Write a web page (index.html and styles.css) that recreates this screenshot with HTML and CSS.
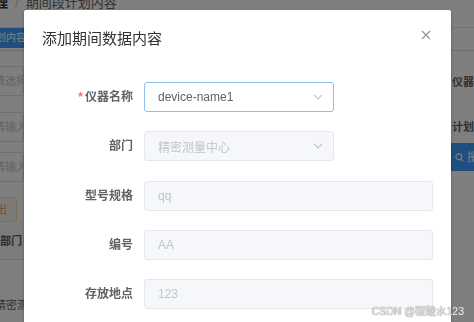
FILE: index.html
```html
<!DOCTYPE html>
<html lang="zh-CN">
<head>
<meta charset="utf-8">
<title>添加期间数据内容</title>
<link rel="stylesheet" href="styles.css">
</head>
<body>
<div class="page">
  <header class="navbar">
    <div class="breadcrumb">
      <span class="bc-prev">理</span><span class="bc-sep">/</span><span class="bc-cur">期间段计划内容</span>
    </div>
  </header>
  <nav class="tags">
    <span class="tag active">期间段计划内容</span>
  </nav>
  <main class="content">
    <div class="col-left">
      <div class="bg-input r1">请选择</div>
      <div class="bg-input r2">请输入</div>
      <div class="bg-input r3">请输入</div>
      <div class="bg-btn warn">导出</div>
      <div class="tbl-head">检测部门</div>
      <div class="tbl-row">精密测量中心</div>
    </div>
    <div class="col-right">
      <div class="bg-label r1">仪器名称</div>
      <div class="bg-label r2">计划名称</div>
      <div class="bg-btn primary">
        <svg class="search-ico" viewBox="0 0 10 10" width="9" height="9"><circle cx="4.3" cy="4.3" r="3.3" fill="none" stroke="#fff" stroke-width="1.2"/><line x1="6.8" y1="6.8" x2="9.2" y2="9.2" stroke="#fff" stroke-width="1.2"/></svg>
        <span>搜索</span>
      </div>
    </div>
  </main>
</div>

<div class="mask"></div>

<div class="dialog">
  <div class="dlg-header">
    <span class="dlg-title">添加期间数据内容</span>
    <button class="dlg-close" type="button" aria-label="关闭">
      <svg viewBox="0 0 10 10" width="10" height="10"><path d="M1 1 L9 9 M9 1 L1 9" stroke="#909399" stroke-width="1.1" fill="none"/></svg>
    </button>
  </div>
  <form class="dlg-body">
    <div class="form-item">
      <label class="form-label required">仪器名称</label>
      <div class="field select focused">
        <span class="value">device-name1</span>
        <svg class="arrow" viewBox="0 0 10 6" width="10" height="6"><polyline points="1,1 5,5 9,1" fill="none" stroke="#c0c4cc" stroke-width="1.1"/></svg>
      </div>
    </div>
    <div class="form-item">
      <label class="form-label">部门</label>
      <div class="field select disabled">
        <span class="placeholder">精密测量中心</span>
        <svg class="arrow" viewBox="0 0 10 6" width="10" height="6"><polyline points="1,1 5,5 9,1" fill="none" stroke="#c0c4cc" stroke-width="1.1"/></svg>
      </div>
    </div>
    <div class="form-item">
      <label class="form-label">型号规格</label>
      <div class="field disabled"><span class="placeholder">qq</span></div>
    </div>
    <div class="form-item">
      <label class="form-label">编号</label>
      <div class="field disabled"><span class="placeholder">AA</span></div>
    </div>
    <div class="form-item">
      <label class="form-label">存放地点</label>
      <div class="field disabled"><span class="placeholder">123</span></div>
    </div>
  </form>
</div>

<div class="watermark">CSDN @碳酸水123</div>
</body>
</html>
```

FILE: styles.css
```css
html, body {
  margin: 0;
  padding: 0;
  width: 474px;
  height: 322px;
  overflow: hidden;
  font-family: "Liberation Sans", "Noto Sans CJK SC", sans-serif;
}

/* ---------- background page ---------- */
.page {
  width: 474px;
  height: 322px;
  overflow: hidden;
  background: #fff;
}
.navbar {
  height: 27px;
  border-bottom: 1px solid #e6e6e6;
  overflow: hidden;
}
.breadcrumb {
  margin-top: -4px;
  margin-left: -5px;
  font-size: 13px;
  line-height: 13px;
  white-space: nowrap;
}
.bc-prev { color: #303133; font-weight: bold; }
.bc-sep { color: #c0c4cc; margin: 0 7px; }
.bc-cur { color: #606266; }

.tags {
  height: 22px;
  border-bottom: 1px solid #d8dce5;
  display: flex;
  overflow: hidden;
}
.tag {
  height: 20px;
  line-height: 20px;
  font-size: 10px;
  padding: 0 8px;
  white-space: nowrap;
}
.tag.active {
  background: #409eff;
  color: #fff;
  margin-left: -52px;
}

.content {
  display: flex;
  justify-content: space-between;
}
.col-left {
  width: 60px;
  margin-left: -36px;
  display: flex;
  flex-direction: column;
}
.bg-input {
  height: 28px;
  line-height: 28px;
  border: 1px solid #dcdfe6;
  border-radius: 3px;
  padding-left: 29px;
  font-size: 11px;
  color: #c0c4cc;
  white-space: nowrap;
  overflow: hidden;
}
.col-left .r1 { margin-top: 15px; }
.col-left .r2 { margin-top: 16px; }
.col-left .r3 { margin-top: 10px; }

.bg-btn {
  height: 25px;
  line-height: 25px;
  font-size: 11px;
  border-radius: 3px;
  box-sizing: border-box;
  white-space: nowrap;
}
.bg-btn.warn {
  margin-top: 15px;
  width: 53px;
  padding-left: 20px;
  background: #fdf6ec;
  border: 1px solid #f5dab1;
  color: #e6a23c;
}
.tbl-head {
  margin-top: 1px;
  height: 36px;
  line-height: 36px;
  background: #f8f8f9;
  border-bottom: 1px solid #dfe6ec;
  font-size: 11px;
  font-weight: bold;
  color: #515a6e;
  padding-left: 14px;
  white-space: nowrap;
}
.tbl-row {
  padding-top: 34px;
  line-height: 22px;
  font-size: 11px;
  color: #606266;
  padding-left: 31px;
  white-space: nowrap;
}

.col-right {
  width: 60px;
  margin-right: -32px;
  display: flex;
  flex-direction: column;
}
.bg-label {
  height: 30px;
  line-height: 30px;
  padding-left: 6px;
  font-size: 11px;
  font-weight: bold;
  color: #606266;
  white-space: nowrap;
}
.col-right .r1 { margin-top: 16px; }
.col-right .r2 { margin-top: 15px; }
.bg-btn.primary {
  margin-top: 1px;
  margin-left: -6px;
  height: 28px;
  padding-left: 15px;
  background: #409eff;
  color: #fff;
  display: flex;
  align-items: center;
  gap: 3px;
}

/* ---------- modal ---------- */
.mask {
  position: fixed;
  inset: 0;
  background: rgba(0, 0, 0, 0.5);
}
.dialog {
  position: absolute;
  left: 24px;
  top: 10px;
  width: 427px;
  height: 312px;
  background: #fff;
  border-radius: 2px 2px 0 0;
  box-shadow: 0 1px 3px rgba(0, 0, 0, 0.3);
  box-sizing: border-box;
  overflow: hidden;
}
.dlg-header {
  display: flex;
  justify-content: space-between;
  align-items: flex-start;
  padding: 17px 20px 8px 18px;
}
.dlg-title {
  font-size: 15px;
  line-height: 24px;
  color: #303133;
}
.dlg-close {
  margin-top: 3px;
  padding: 0;
  border: 0;
  background: none;
  width: 10px;
  height: 10px;
  display: block;
}
.dlg-close svg { display: block; }

.dlg-body {
  margin: 0;
  padding: 23px 18px 0 18px;
  display: flex;
  flex-direction: column;
  gap: 19.25px;
}
.form-item {
  display: grid;
  grid-template-columns: 91px 1fr;
  column-gap: 11px;
  align-items: start;
}
.form-label {
  text-align: right;
  font-size: 12px;
  line-height: 30px;
  font-weight: bold;
  color: #606266;
}
.form-label.required::before {
  content: "*";
  color: #f56c6c;
  margin-right: 2px;
}
.field {
  height: 30px;
  box-sizing: border-box;
  border: 1px solid #dcdfe6;
  border-radius: 3px;
  display: flex;
  align-items: center;
  justify-content: space-between;
  padding: 0 10px 0 13px;
  font-size: 12px;
}
.field.select { width: 190px; }
.field.focused { border-color: #8cbef0; }
.field.disabled {
  background: #f5f7fa;
  border-color: #e4e7ed;
}
.value { color: #606266; }
.placeholder { color: #c0c4cc; }
.arrow { display: block; }

.watermark {
  position: absolute;
  right: 10px;
  bottom: 5px;
  font-size: 10.5px;
  line-height: 12px;
  color: #e8e8e8;
  text-shadow: 0 0 1px #8a8a8a, 0 0 1px #8a8a8a;
  white-space: nowrap;
}
```
